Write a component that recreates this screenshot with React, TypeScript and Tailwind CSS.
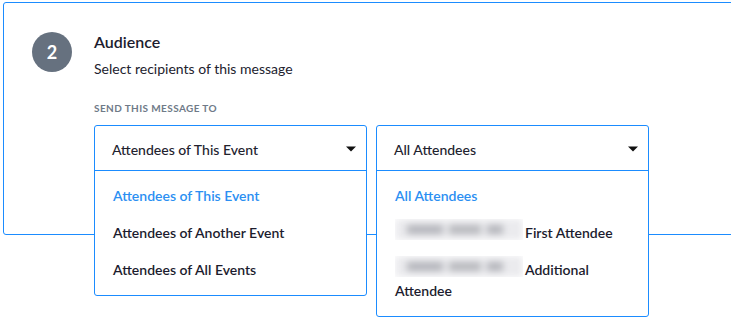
import React from 'react';

type Option = { label: string; blurred?: boolean; active?: boolean };

const eventOptions: Option[] = [
  { label: 'Attendees of This Event', active: true },
  { label: 'Attendees of Another Event' },
  { label: 'Attendees of All Events' },
];

const attendeeOptions: Option[] = [
  { label: 'All Attendees', active: true },
  { label: 'First Attendee', blurred: true },
  { label: 'Additional Attendee', blurred: true },
];

const Caret = () => (
  <svg width="10" height="6" viewBox="0 0 10 6" className="shrink-0">
    <path d="M0 0.5 L10 0.5 L5 5.5 Z" fill="#111" />
  </svg>
);

// redacted venue name: just grey smudges, like the blurred capture
const Redacted = () => (
  <span className="relative -top-[3px] mr-[2px] inline-block h-[21px] w-[128px] align-[-5px] overflow-hidden">
    <span className="flex h-full w-full items-center gap-[6px] bg-[#ebebee] px-[12px] blur-[3.5px]">
      <span className="h-[9px] w-[36px] bg-[#b3b4ba]" />
      <span className="h-[9px] w-[32px] bg-[#b6b7bc]" />
      <span className="h-[9px] w-[16px] bg-[#b3b4ba]" />
    </span>
  </span>
);

const Dropdown = ({ value, options }: { value: string; options: Option[] }) => (
  <div className="w-[273px] shrink-0 rounded-[3px] border border-[#1b8cff] bg-white">
    <div className="flex h-[45px] items-center justify-between border-b border-[#1b8cff] pl-[17px] pr-[10px] pt-[2px] text-[14px] font-medium text-[#22222e]">
      <span>{value}</span>
      <Caret />
    </div>
    <ul className="pb-[7px] pt-[6px]">
      {options.map((o) => (
        <li
          key={o.label}
          className={
            'px-[18px] py-[8px] text-[14px] font-semibold leading-[21px] ' +
            (o.active ? 'text-[#2b8ff2]' : 'text-[#1c1c2e]')
          }
        >
          {o.blurred && <Redacted />}
          {o.label}
        </li>
      ))}
    </ul>
  </div>
);

export default function App() {
  return (
    <div className="h-[318px] w-[731px] overflow-hidden bg-white font-['Lato',sans-serif]">
      <div className="ml-[3px] mt-[2px] flex h-[233px] w-[780px] gap-[22px] rounded-[3px] border border-[#1b8cff] pl-[28px] pt-[29px]">
        <div className="flex h-10 w-10 shrink-0 items-center justify-center rounded-full bg-[#66717f] text-[18px] font-bold text-white">
          2
        </div>
        <div className="flex flex-col">
          <h2 className="text-[16px] font-semibold leading-[20px] text-[#1c1c2e]">Audience</h2>
          <p className="mt-[7px] text-[14px] leading-[20px] text-[#22222e]">Select recipients of this message</p>
          <p className="mt-[22px] text-[10px] font-bold uppercase leading-[14px] tracking-[0.4px] text-[#6f7a88]">
            Send this message to
          </p>
          <div className="mt-[10px] flex items-start gap-[9px]">
            <Dropdown value="Attendees of This Event" options={eventOptions} />
            <Dropdown value="All Attendees" options={attendeeOptions} />
          </div>
        </div>
      </div>
    </div>
  );
}
